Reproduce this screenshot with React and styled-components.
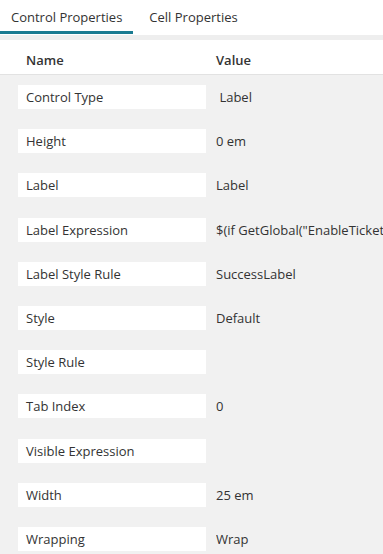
import React from "react";
import styled, { createGlobalStyle } from "styled-components";

const GlobalStyle = createGlobalStyle`
  html, body {
    margin: 0;
    padding: 0;
    background: #f1f1f1;
    font-family: "Open Sans", "Liberation Sans", sans-serif;
    color: #333;
  }
`;

const properties = [
  { name: "Control Type", value: " Label" },
  { name: "Height", value: "0 em" },
  { name: "Label", value: "Label" },
  { name: "Label Expression", value: '$(if GetGlobal("EnableTicketing")' },
  { name: "Label Style Rule", value: "SuccessLabel" },
  { name: "Style", value: "Default" },
  { name: "Style Rule", value: "" },
  { name: "Tab Index", value: "0" },
  { name: "Visible Expression", value: "" },
  { name: "Width", value: "25 em" },
  { name: "Wrapping", value: "Wrap" },
];

function App() {
  return (
    <Panel>
      <GlobalStyle />
      <Tabs>
        <Tab active>Control Properties</Tab>
        <Tab>Cell Properties</Tab>
      </Tabs>
      <Spacer />
      <Header>
        <HeadCell>Name</HeadCell>
        <HeadCell>Value</HeadCell>
      </Header>
      <Body>
        {properties.map((p) => (
          <Row key={p.name}>
            <NameBox>{p.name}</NameBox>
            <Value>{p.value}</Value>
          </Row>
        ))}
      </Body>
    </Panel>
  );
}

export default App;

const Panel = styled.div`
  width: 383px;
  overflow: hidden;
`;

const Tabs = styled.div`
  display: flex;
  gap: 5px;
  background: #fff;
  height: 35px;
`;

const Tab = styled.div`
  height: 34px;
  box-sizing: border-box;
  padding: 8px 11px 0;
  margin-bottom: 1px;
  font-size: 13px;
  line-height: 18px;
  color: #333;
  border-bottom: 3px solid ${(p) => (p.active ? "#1a7b91" : "transparent")};
`;

const Spacer = styled.div`
  height: 5px;
  background: #eeeeee;
`;

const Header = styled.div`
  display: grid;
  grid-template-columns: 190px 1fr;
  align-items: center;
  height: 34px;
  background: #fff;
  border-bottom: 1px solid #e2e2e2;
  padding-left: 26px;
`;

const HeadCell = styled.div`
  font-size: 13px;
  font-weight: 600;
  color: #333;
  padding-top: 5px;
`;

const Body = styled.div`
  padding-top: 10px;
  background: #f1f1f1;
`;

const Row = styled.div`
  display: grid;
  grid-template-columns: 188px 1fr;
  column-gap: 10px;
  align-items: center;
  align-content: start;
  height: 44.2px;
  padding-left: 18px;
`;

const NameBox = styled.div`
  background: #fff;
  height: 24px;
  line-height: 24px;
  padding-left: 8px;
  font-size: 13px;
  color: #333;
  white-space: nowrap;
`;

const Value = styled.div`
  font-size: 13px;
  color: #333;
  white-space: pre;
  overflow: hidden;
  line-height: 24px;
`;
